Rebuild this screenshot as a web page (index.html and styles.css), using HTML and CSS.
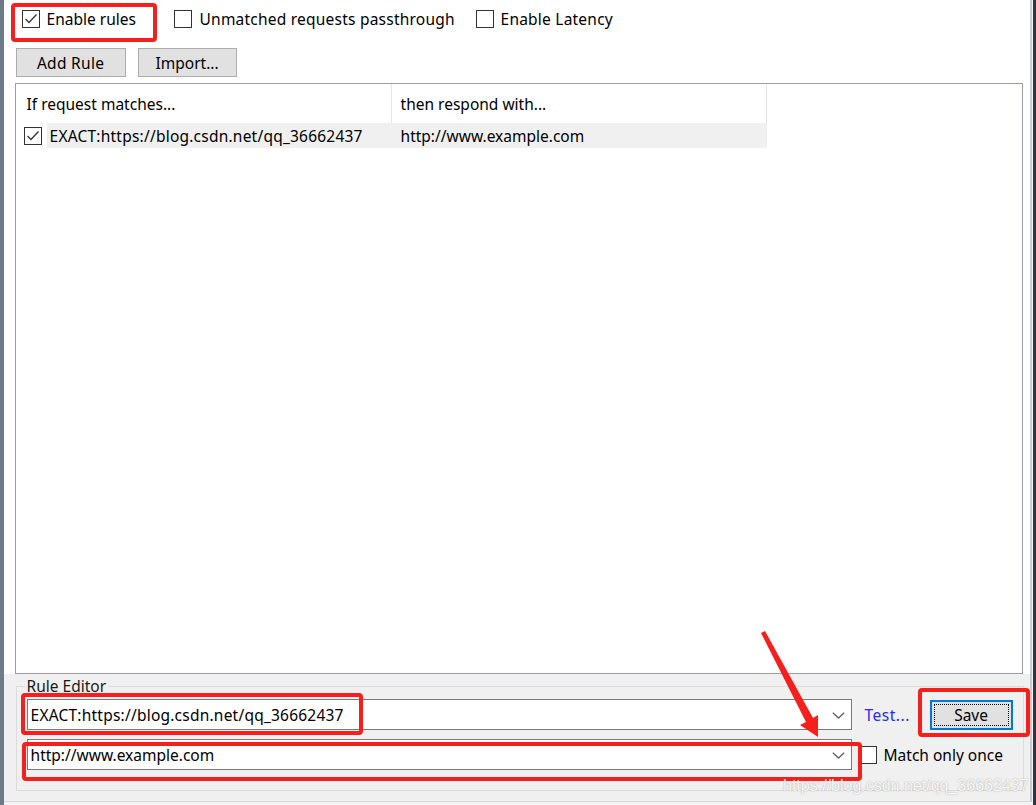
FILE: index.html
```html
<!DOCTYPE html>
<html lang="en">
<head>
<meta charset="utf-8">
<title>AutoResponder</title>
<link rel="stylesheet" href="styles.css">
</head>
<body>
<div class="window">
  <div class="edge-left"></div>
  <div class="pane">
    <div class="top">
      <div class="options">
        <label class="opt opt-rules"><span class="cb"><svg viewBox="0 0 16 16" width="16" height="16"><polyline points="2.5,8 6,11.5 13.5,3.5" /></svg></span><span>Enable rules</span></label>
        <label class="opt opt-pass"><span class="cb"></span><span class="wide">Unmatched requests passthrough</span></label>
        <label class="opt"><span class="cb"></span><span class="wide">Enable Latency</span></label>
      </div>
      <div class="buttons">
        <button class="btn btn-add">Add Rule</button>
        <button class="btn btn-import">Import...</button>
      </div>
      <div class="list">
        <div class="list-head">
          <div class="col col-1">If request matches...</div>
          <div class="col col-2">then respond with...</div>
        </div>
        <div class="list-row">
          <div class="row-check"><span class="cb"><svg viewBox="0 0 16 16" width="16" height="16"><polyline points="2.5,8 6,11.5 13.5,3.5" /></svg></span></div>
          <div class="row-cells">
            <div class="cell cell-1 wide">EXACT:https://blog.csdn.net/qq_36662437</div>
            <div class="cell cell-2">http://www.example.com</div>
          </div>
        </div>
      </div>
    </div>
    <div class="editor">
      <fieldset class="group">
        <legend>Rule Editor</legend>
        <div class="edit-row">
          <div class="combo">
            <span class="combo-text wide">EXACT:https://blog.csdn.net/qq_36662437</span>
            <svg class="chev" viewBox="0 0 13 7" width="13" height="7"><polyline points="0.8,0.8 6.5,6 12.2,0.8" /></svg>
          </div>
          <a class="test-link">Test...</a>
          <button class="btn btn-save">Save</button>
        </div>
        <div class="edit-row edit-row-2">
          <div class="combo">
            <span class="combo-text">http://www.example.com</span>
            <svg class="chev" viewBox="0 0 13 7" width="13" height="7"><polyline points="0.8,0.8 6.5,6 12.2,0.8" /></svg>
          </div>
          <label class="opt opt-once"><span class="cb"></span><span>Match only once</span></label>
        </div>
      </fieldset>
    </div>
  </div>
  <div class="edge-gap"></div>
  <div class="edge-right"></div>
</div>

<div class="mark mark-rules"></div>
<div class="mark mark-match"></div>
<div class="mark mark-respond"></div>
<div class="mark mark-save"></div>
<svg class="arrow" viewBox="0 0 1036 805" width="1036" height="805">
  <polygon points="761,633 765,631 813,718 818,715 818,737 800,725 806,722" />
</svg>
<div class="watermark">https://blog.csdn.net/qq_36662437</div>
</body>
</html>
```

FILE: styles.css
```css
* {
  box-sizing: border-box;
}

html, body {
  margin: 0;
  padding: 0;
}

body {
  width: 1036px;
  height: 805px;
  overflow: hidden;
  background: #f3f3f3;
  font-family: "Noto Sans", "Open Sans", "DejaVu Sans", sans-serif;
  font-size: 15.5px;
  color: #000;
  position: relative;
}

.wide {
  letter-spacing: 0.22px;
}

.window {
  display: flex;
  height: 805px;
}

.edge-left {
  width: 4px;
  background: #6f7a89;
}

.pane {
  flex: 1;
  height: 802px;
  display: flex;
  flex-direction: column;
  border-right: 2px solid #c9cbce;
  border-bottom: 1px solid #d6d6d6;
  background: #fff;
}

.edge-gap {
  width: 2px;
  background: #f4f4f4;
}

.edge-right {
  width: 3px;
  background: #2f3642;
}

/* ---------- top area ---------- */
.top {
  background: #fff;
  padding-left: 11px;
}

.options {
  height: 38px;
  display: flex;
  align-items: center;
  padding-left: 7px;
}

.opt {
  display: flex;
  align-items: center;
  gap: 7px;
  line-height: 20px;
  white-space: nowrap;
}

.opt-rules {
  width: 152px;
}

.opt-pass {
  width: 302px;
}

.opt-pass .wide {
  margin-left: 1px;
}

.cb {
  width: 18px;
  height: 18px;
  flex: none;
  border: 1px solid #333;
  background: #fff;
  display: flex;
  align-items: center;
  justify-content: center;
}

.cb svg polyline {
  fill: none;
  stroke: #3a3a3a;
  stroke-width: 1.4;
}

.buttons {
  display: flex;
  gap: 12px;
  margin-top: 10px;
  padding-left: 1px;
}

.btn {
  height: 29px;
  border: 1px solid #adadad;
  background: #e1e1e1;
  font: inherit;
  color: #000;
  padding: 0;
  line-height: 20px;
}

.btn-add {
  width: 110px;
  letter-spacing: 0.3px;
}

.btn-import {
  width: 99px;
}

.list {
  margin-top: 6px;
  width: 1008px;
  height: 591px;
  border: 1px solid #9a9da1;
  background: #fff;
}

.list-head {
  display: flex;
  height: 39px;
  align-items: stretch;
}

.col {
  display: flex;
  align-items: center;
  line-height: 20px;
  white-space: nowrap;
}

.col-1 {
  width: 376px;
  padding-left: 11px;
  border-right: 1px solid #e5e5e5;
}

.col-2 {
  width: 375px;
  padding-left: 9px;
  border-right: 1px solid #e5e5e5;
}

.list-row {
  display: flex;
  height: 25px;
}

.row-check {
  width: 31px;
  display: flex;
  align-items: center;
  padding-left: 8px;
}

.row-cells {
  display: flex;
  width: 720px;
  background: #f0f0f0;
}

.cell {
  display: flex;
  align-items: center;
  line-height: 20px;
  white-space: nowrap;
}

.cell-1 {
  width: 345px;
  padding-left: 3px;
}

.cell-2 {
  padding-left: 9px;
}

/* ---------- rule editor ---------- */
.editor {
  flex: 1;
  background: #f0f0f0;
  padding: 2px 6px 0 12px;
}

.group {
  margin: 0;
  min-width: 0;
  border: 1px solid #dcdcdc;
  padding: 3px 10px 20px 10px;
}

.group legend {
  padding: 0 2px;
  margin-left: -2px;
  line-height: 20px;
  color: #1a1a1a;
}

.edit-row {
  display: flex;
  align-items: center;
}

.edit-row-2 {
  margin-top: 9px;
}

.combo {
  width: 825px;
  height: 31px;
  flex: none;
  border: 1px solid #7a7a7a;
  background: #fff;
  display: flex;
  align-items: center;
  justify-content: space-between;
  padding: 0 6px 0 3px;
}

.combo-text {
  line-height: 20px;
  white-space: nowrap;
}

.chev {
  margin-top: 2px;
}

.chev polyline {
  fill: none;
  stroke: #606060;
  stroke-width: 1.3;
}

.test-link {
  margin-left: 13px;
  width: 46px;
  color: #2a2af5;
  line-height: 20px;
  letter-spacing: 0.5px;
  white-space: nowrap;
}

.btn-save {
  margin-left: 19px;
  width: 83px;
  height: 30px;
  border: 2px solid #0078d7;
  outline: 1px dotted #000;
  outline-offset: -5px;
}

.opt-once {
  margin-left: 7px;
}

/* ---------- annotations ---------- */
.mark {
  position: absolute;
  border: 4px solid #f5201c;
  border-radius: 4px;
}

.mark-rules {
  left: 11px;
  top: 3px;
  width: 146px;
  height: 39px;
}

.mark-match {
  left: 21px;
  top: 693px;
  width: 342px;
  height: 42px;
}

.mark-respond {
  left: 22px;
  top: 742px;
  width: 840px;
  height: 39px;
}

.mark-save {
  left: 918px;
  top: 688px;
  width: 112px;
  height: 49px;
}

.arrow {
  position: absolute;
  left: 0;
  top: 0;
  pointer-events: none;
}

.arrow polygon {
  fill: #f5201c;
}

.watermark {
  position: absolute;
  left: 783px;
  top: 776px;
  font-family: "Liberation Sans", Arial, sans-serif;
  font-size: 16px;
  line-height: 20px;
  color: rgba(255, 255, 255, 0.9);
  text-shadow: 0 0 1.5px rgba(0, 0, 0, 0.35);
  white-space: nowrap;
}
```
